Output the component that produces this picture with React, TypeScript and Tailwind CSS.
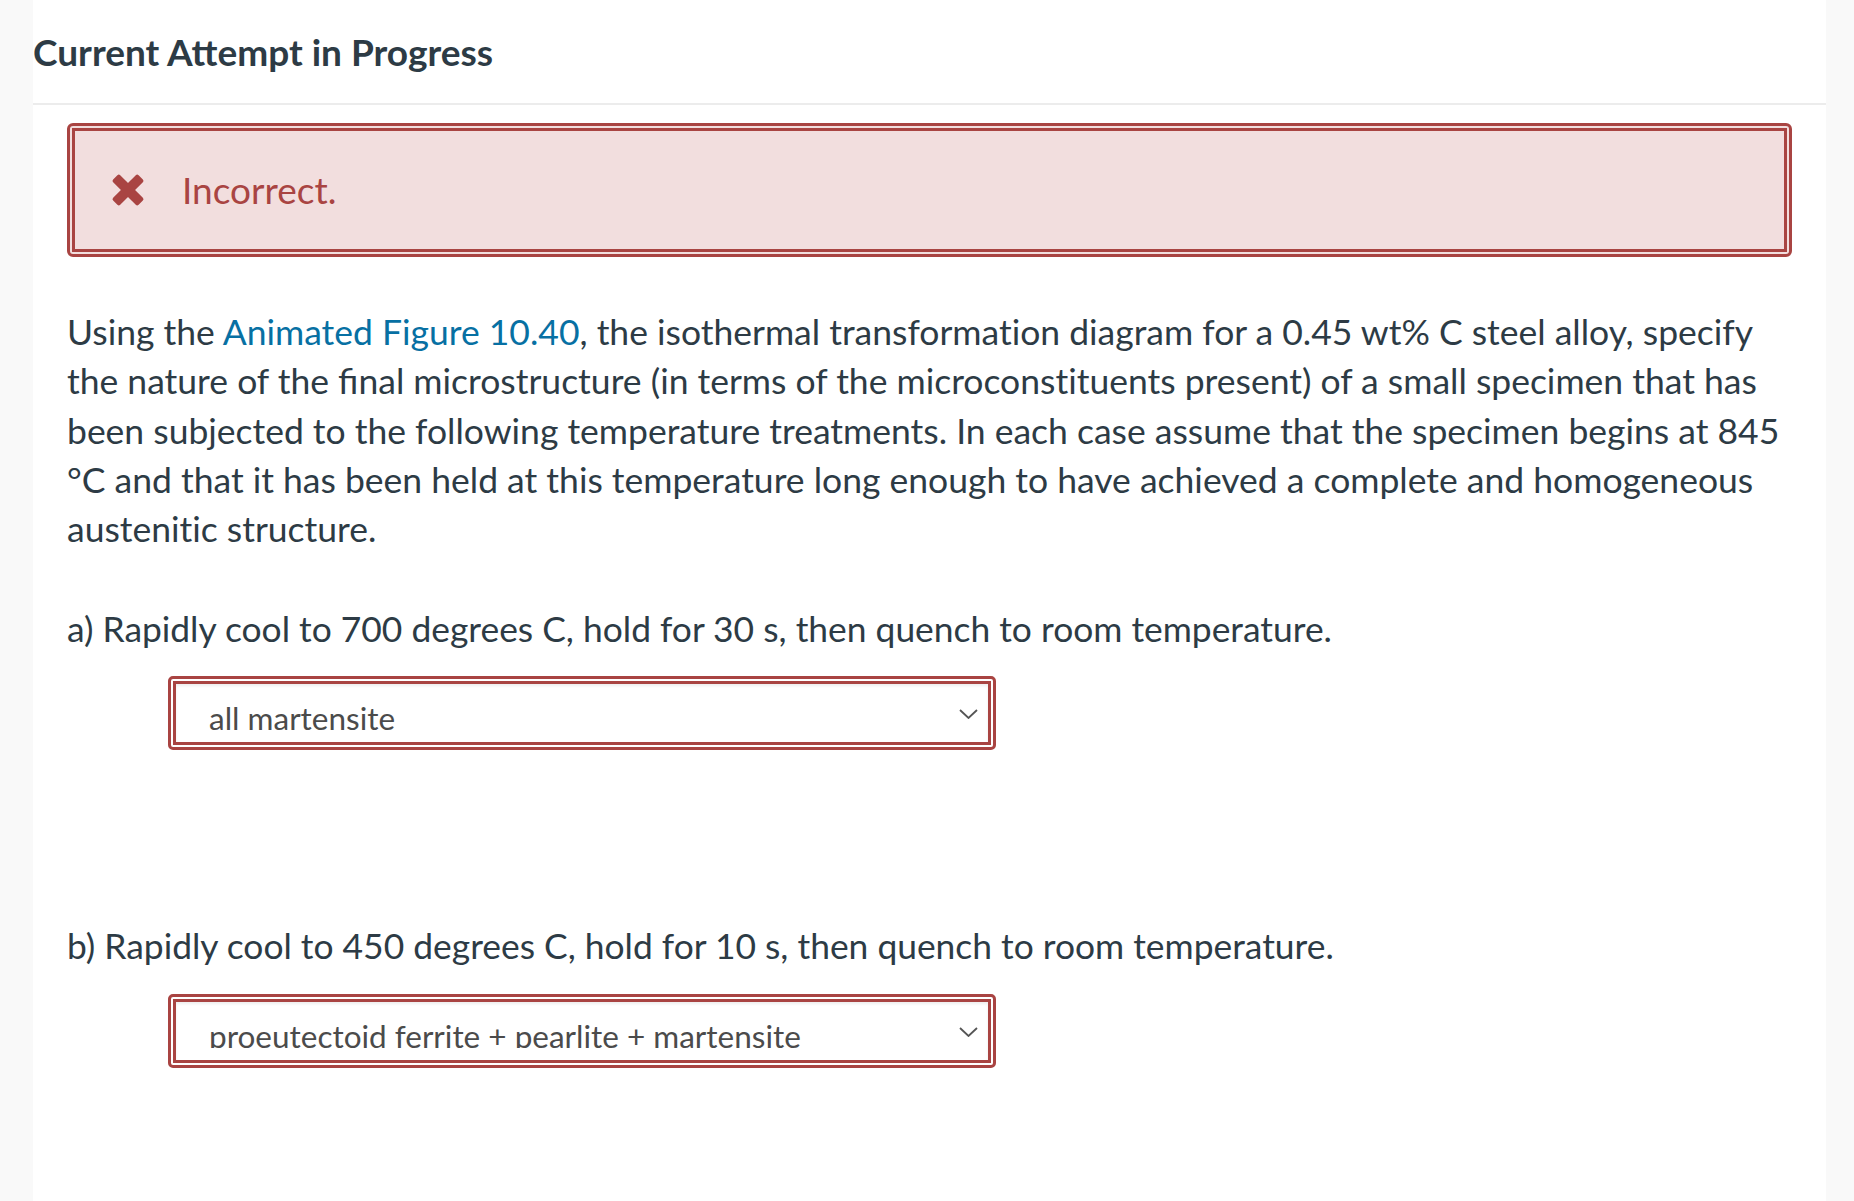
import React from 'react';

const font = { fontFamily: 'Lato, "Noto Sans", sans-serif' };

// words where Lato would otherwise draw its "ti" ligature
function NoLig({ children }: { children: React.ReactNode }) {
  return <span className="[font-variant-ligatures:none]">{children}</span>;
}

function CrossIcon() {
  return (
    <svg width="32" height="32" viewBox="0 0 32 32" className="shrink-0 overflow-visible">
      <g transform="rotate(45 16 16)" fill="#a94442">
        <rect x="-2" y="11" width="36" height="10" rx="2" />
        <rect x="11" y="-2" width="10" height="36" rx="2" />
      </g>
    </svg>
  );
}

function Chevron() {
  return (
    <svg width="19" height="10" viewBox="0 0 19 10" className="shrink-0">
      <path d="M1 1 L9.5 9 L18 1" fill="none" stroke="#555" strokeWidth="1.8" />
    </svg>
  );
}

function AnswerSelect({ value }: { value: string }) {
  return (
    <div className="ml-[101px] w-[828px] h-[74px] rounded-[5px] border-[3px] border-[#a94442] bg-white p-[2px]">
      <div className="relative h-full border-[3px] border-[#a94442] shadow-[inset_0_2px_3px_rgba(0,0,0,0.07)]">
        <div className="h-[46px] overflow-hidden pl-[33px] pt-[14px] text-[31.5px] leading-[40px] text-[#4b4b4b] whitespace-nowrap">
          {value}
        </div>
        <div className="absolute right-[10px] top-[25px] flex">
          <Chevron />
        </div>
      </div>
    </div>
  );
}

export default function App() {
  return (
    <div className="flex min-h-[1201px] w-full bg-white text-[#2d3b45]" style={font}>
      <div className="w-[33px] shrink-0 bg-[#f9f9f9]" />
      <main className="flex-1 bg-white">
        <h1 className="pt-[30px] text-[37px] font-bold leading-[44px] text-[#2d3b45]">
          Current Attempt in Progress
        </h1>
        <div className="mt-[29px] h-[2px] bg-[#ececec]" />

        <div className="px-[34px] pt-[18px]">
          {/* result banner */}
          <div className="h-[134px] rounded-[6px] border-[3px] border-[#a94442] bg-[#f2dede] p-[2px]">
            <div className="flex h-full items-center border-[3px] border-[#a94442] pl-[37px]">
              <CrossIcon />
              <span className="ml-[38px] text-[37px] leading-[44px] text-[#a94442]">Incorrect.</span>
            </div>
          </div>

          <p className="mt-[50px] whitespace-nowrap text-[35.5px] leading-[49.3px]">
            Using the <a className="text-[#0770a3]">Animated Figure 10.40</a>, the isothermal{' '}
            <NoLig>transformation</NoLig> diagram for a 0.45 wt% C steel alloy, specify
            <br />
            the nature of the final microstructure (in terms of the <NoLig>microconstituents</NoLig> present) of a
            small specimen that has
            <br />
            been subjected to the following temperature treatments. In each case assume that the specimen
            begins at 845
            <br />
            °C and that it has been held at this temperature long enough to have achieved a complete and
            homogeneous
            <br />
            <NoLig>austenitic</NoLig> structure.
          </p>

          <p className="mt-[51px] text-[35.4px] leading-[49.3px]">
            a) Rapidly cool to 700 degrees C, hold for 30 s, then quench to room temperature.
          </p>
          <div className="mt-[22px]">
            <AnswerSelect value="all martensite" />
          </div>

          <p className="mt-[171px] text-[35.4px] leading-[49.3px]">
            b) Rapidly cool to 450 degrees C, hold for 10 s, then quench to room temperature.
          </p>
          <div className="mt-[24px]">
            <AnswerSelect value="proeutectoid ferrite + pearlite + martensite" />
          </div>
        </div>
      </main>
      <div className="w-[28px] shrink-0 bg-[#f9f9f9]" />
    </div>
  );
}
